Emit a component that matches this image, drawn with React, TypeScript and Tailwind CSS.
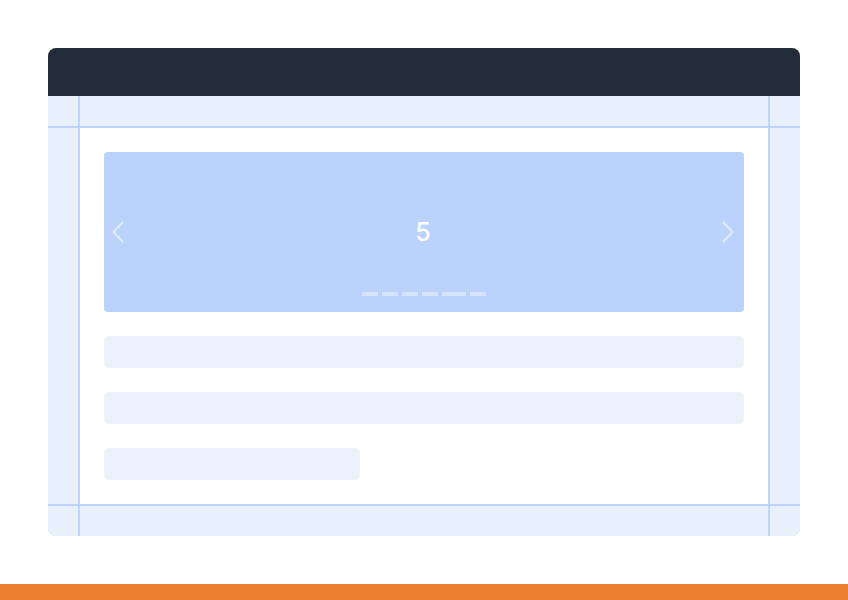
import { ReactNode } from "react";

function Chevron({ dir }: { dir: "left" | "right" }) {
  return (
    <svg width="12" height="22" viewBox="0 0 12 22" fill="none" className="opacity-50">
      <polyline
        points={dir === "left" ? "10.5,1.5 1.5,11 10.5,20.5" : "1.5,1.5 10.5,11 1.5,20.5"}
        stroke="white"
        strokeWidth="2.5"
        strokeLinecap="round"
        strokeLinejoin="round"
      />
    </svg>
  );
}

function Cell({ className, children }: { className: string; children?: ReactNode }) {
  return <div className={className}>{children}</div>;
}

export default function App() {
  const dots = [0, 1, 2, 3, 4, 5];
  const active = 4;

  return (
    <div className="min-h-[600px] bg-white flex flex-col font-['Liberation_Sans',Arial,sans-serif]">
      <div className="pt-12 px-12">
        <div className="rounded-lg overflow-hidden h-[488px] flex flex-col">
          {/* Header */}
          <div className="h-12 bg-[#242b38] shrink-0" />

          {/* Layout grid */}
          <div className="flex-1 grid grid-cols-[30px_2px_1fr_2px_30px] grid-rows-[30px_2px_1fr_2px_30px] bg-[#bdd5fa]">
            <Cell className="bg-[#e8f0fc]" />
            <Cell className="" />
            <Cell className="bg-[#e8f0fc]" />
            <Cell className="" />
            <Cell className="bg-[#e8f0fc]" />

            <Cell className="" />
            <Cell className="" />
            <Cell className="" />
            <Cell className="" />
            <Cell className="" />

            <Cell className="bg-[#e8f0fc]" />
            <Cell className="" />
            <Cell className="bg-white p-6 flex flex-col gap-6">
              {/* Carousel */}
              <div className="relative h-40 rounded bg-[#bbd3fa] flex items-center justify-between pl-2 pr-2.5">
                <Chevron dir="left" />
                <span className="text-white text-[25px] font-medium leading-none font-['Inter',sans-serif]">5</span>
                <Chevron dir="right" />
                <div className="absolute bottom-4 left-0 right-0 flex justify-center gap-1">
                  {dots.map((d) => (
                    <span
                      key={d}
                      className={
                        d === active
                          ? "h-1 w-6 bg-white/40"
                          : "h-1 w-4 bg-white/40"
                      }
                    />
                  ))}
                </div>
              </div>

              {/* Skeleton rows */}
              <div className="h-8 rounded-md bg-[#eaf1fd]" />
              <div className="h-8 rounded-md bg-[#eaf1fd]" />
              <div className="h-8 w-64 rounded-md bg-[#eaf1fd]" />
            </Cell>
            <Cell className="" />
            <Cell className="bg-[#e8f0fc]" />

            <Cell className="" />
            <Cell className="" />
            <Cell className="" />
            <Cell className="" />
            <Cell className="" />

            <Cell className="bg-[#e8f0fc]" />
            <Cell className="" />
            <Cell className="bg-[#e8f0fc]" />
            <Cell className="" />
            <Cell className="bg-[#e8f0fc]" />
          </div>
        </div>
      </div>

      <div className="mt-auto h-4 bg-[#ed7f33]" />
    </div>
  );
}
